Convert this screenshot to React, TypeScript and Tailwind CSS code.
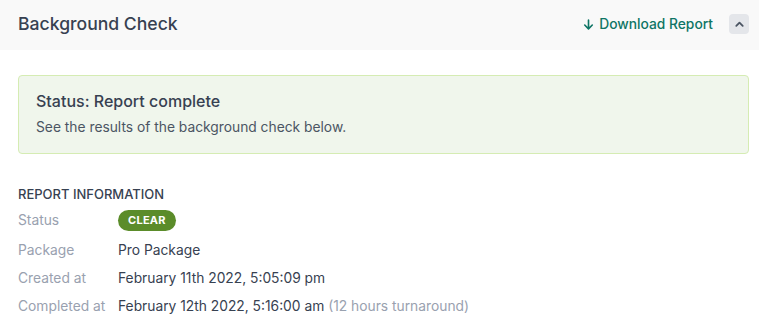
import React from 'react';

const rows: { label: string; value: React.ReactNode; tall?: boolean }[] = [
  {
    label: 'Status',
    tall: true,
    value: (
      <span className="inline-flex h-[21px] items-center rounded-full bg-[#5b8c2a] px-[10px] text-[11px] font-bold tracking-wide text-white">
        CLEAR
      </span>
    ),
  },
  { label: 'Package', value: 'Pro Package' },
  { label: 'Created at', value: 'February 11th 2022, 5:05:09 pm' },
  {
    label: 'Completed at',
    value: (
      <>
        February 12th 2022, 5:16:00 am <span className="text-gray-400">(12 hours turnaround)</span>
      </>
    ),
  },
];

export default function App() {
  return (
    <div className="min-h-[324px] bg-white font-['Inter',sans-serif]">
      {/* Header */}
      <div className="flex h-[50px] items-center justify-between bg-[#f9f9f9] pb-[2px] pl-[18px] pr-[10px]">
        <h1 className="text-[17.6px] font-medium text-[#374151]">Background Check</h1>
        <div className="flex items-center gap-4">
          <button className="flex items-center gap-[4px] text-[13.8px] font-medium text-[#0f7565]">
            <svg width="13" height="13" viewBox="0 0 24 24" fill="none" stroke="currentColor" strokeWidth="3" strokeLinecap="round" strokeLinejoin="round">
              <path d="M12 4v16M5 13l7 7 7-7" />
            </svg>
            Download Report
          </button>
          <button className="flex h-[20px] w-[20px] items-center justify-center rounded bg-[#e4e6ea] text-[#4b5563]">
            <svg width="11" height="11" viewBox="0 0 24 24" fill="none" stroke="currentColor" strokeWidth="4" strokeLinecap="round" strokeLinejoin="round">
              <path d="M5 15l7-7 7 7" />
            </svg>
          </button>
        </div>
      </div>

      <div className="pl-[18px] pr-[10px] pt-[25px]">
        {/* Alert */}
        <div className="rounded border border-[#d5ecb3] bg-[#f0f6ec] px-[17px] pb-[16px] pt-[13px]">
          <h2 className="text-[16px] font-medium leading-6 text-[#374151]">Status: Report complete</h2>
          <p className="mt-[4px] text-[13.8px] leading-5 text-[#4b5563]">See the results of the background check below.</p>
        </div>

        {/* Report info */}
        <h3 className="mt-[30px] text-[13px] font-medium uppercase leading-5 text-[#374151]">Report Information</h3>
        <div className="mt-[4px] flex flex-col gap-[8px]">
          {rows.map((r) => (
            <div key={r.label} className={`flex items-center text-[13.8px] ${r.tall ? 'h-[24px]' : 'h-[20px]'}`}>
              <span className="w-[100px] text-gray-400">{r.label}</span>
              <span className="text-[#374151]">{r.value}</span>
            </div>
          ))}
        </div>
      </div>
    </div>
  );
}
